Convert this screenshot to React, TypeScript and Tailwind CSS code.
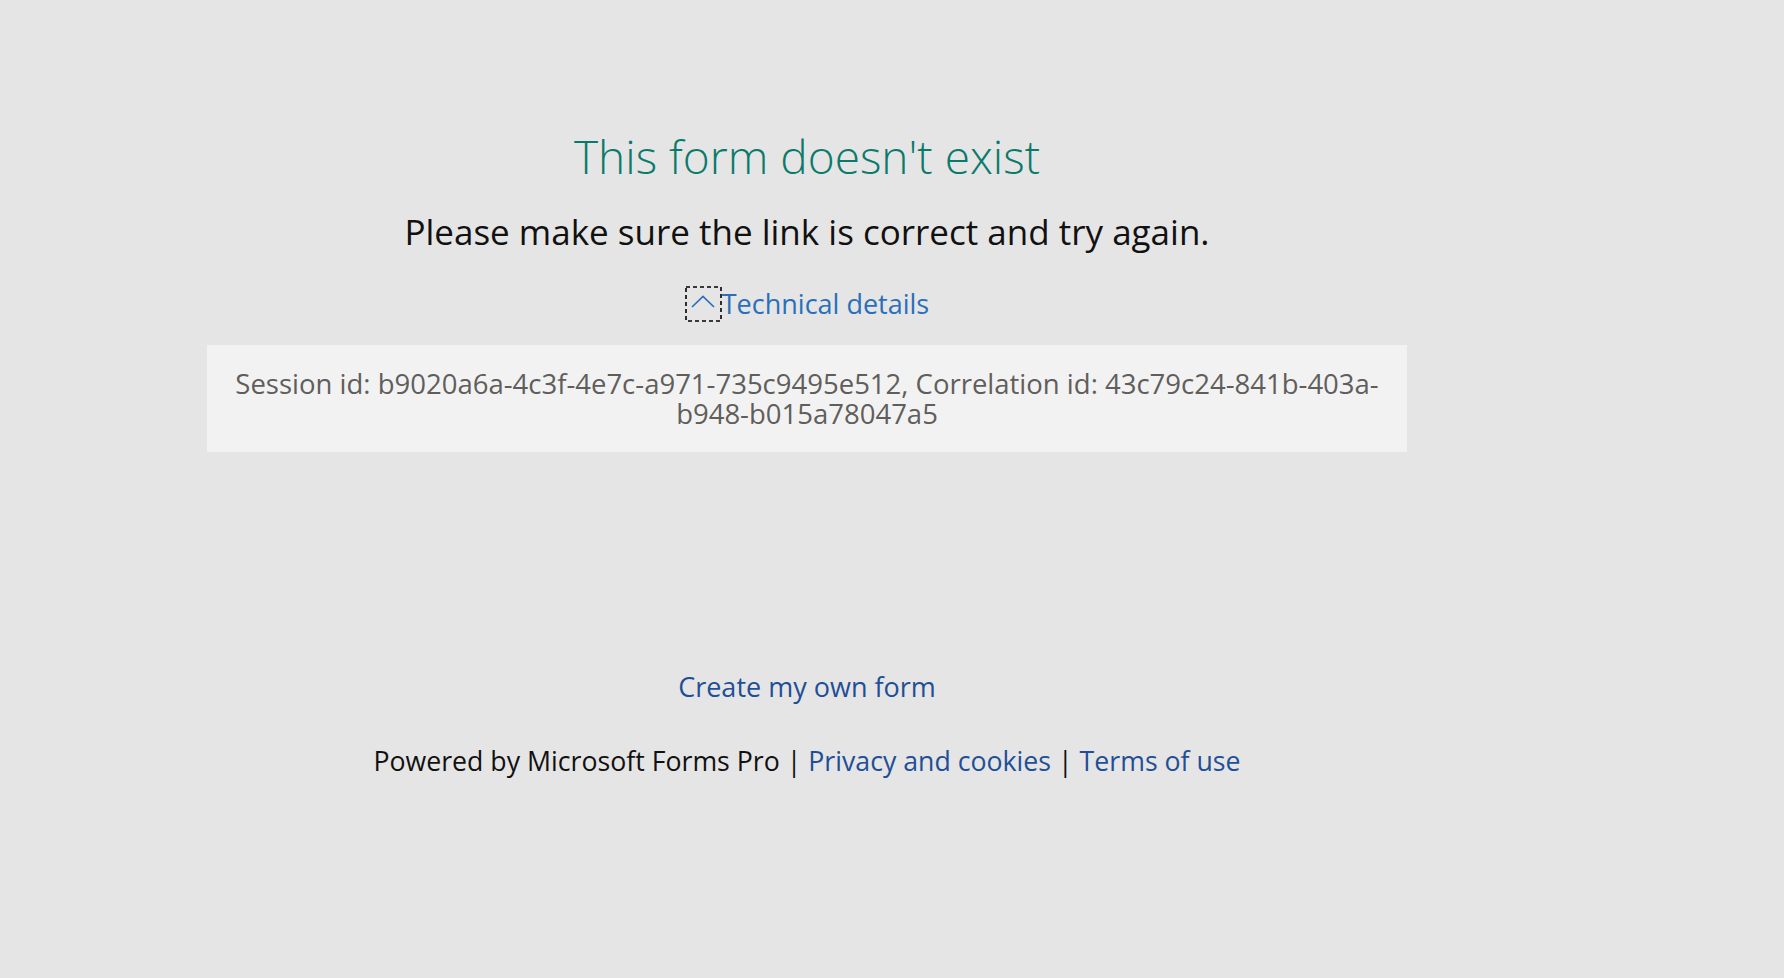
import React from "react";

export default function App() {
  return (
    <div
      className="min-h-screen w-full bg-[#e6e5e5] text-[#000]"
      style={{ fontFamily: '"Open Sans", "Noto Sans", Arial, sans-serif' }}
    >
      <div className="ml-[207px] flex w-[1200px] flex-col items-center pt-[124px] text-center">
        <h1 className="text-[46px] font-light leading-[64px] text-[#0a7a6b]">
          This form doesn't exist
        </h1>
        <p className="mt-[20px] text-[35px] leading-[48px] text-[#111]">
          Please make sure the link is correct and try again.
        </p>
        <button className="mt-[30px] flex items-center text-[27px] leading-[36px] text-[#2a6fb9]">
          <span className="relative flex h-[36px] w-[37px] items-center justify-center pb-[5px]">
            <svg className="absolute inset-0" width="37" height="36" viewBox="0 0 37 36" fill="none">
              <rect x="1" y="1" width="35" height="34" stroke="#000" strokeWidth="1.6" strokeDasharray="4 3" />
            </svg>
            <svg width="24" height="13" viewBox="0 0 24 13" fill="none">
              <path d="M1 12 L12 1.5 L23 12" stroke="#2a6fb9" strokeWidth="1.7" />
            </svg>
          </span>
          <span>Technical details</span>
        </button>
        <div className="mt-[23px] flex h-[107px] w-full flex-col items-center justify-center bg-[#f3f2f2] px-[20px] text-[27.5px] leading-[30px] text-[#605e5c]">
          <div className="whitespace-nowrap">
            Session id: b9020a6a-4c3f-4e7c-a971-735c9495e512, Correlation id: 43c79c24-841b-403a-
          </div>
          <div className="whitespace-nowrap">b948-b015a78047a5</div>
        </div>
        <a className="mt-[217px] text-[27px] leading-[36px] text-[#1f4f96]">
          Create my own form
        </a>
        <div className="mt-[38px] text-[26.7px] leading-[36px] text-[#111]">
          Powered by Microsoft Forms Pro |{" "}
          <a className="text-[#1f4f96]">Privacy and cookies</a> |{" "}
          <a className="text-[#1f4f96]">Terms of use</a>
        </div>
      </div>
    </div>
  );
}
